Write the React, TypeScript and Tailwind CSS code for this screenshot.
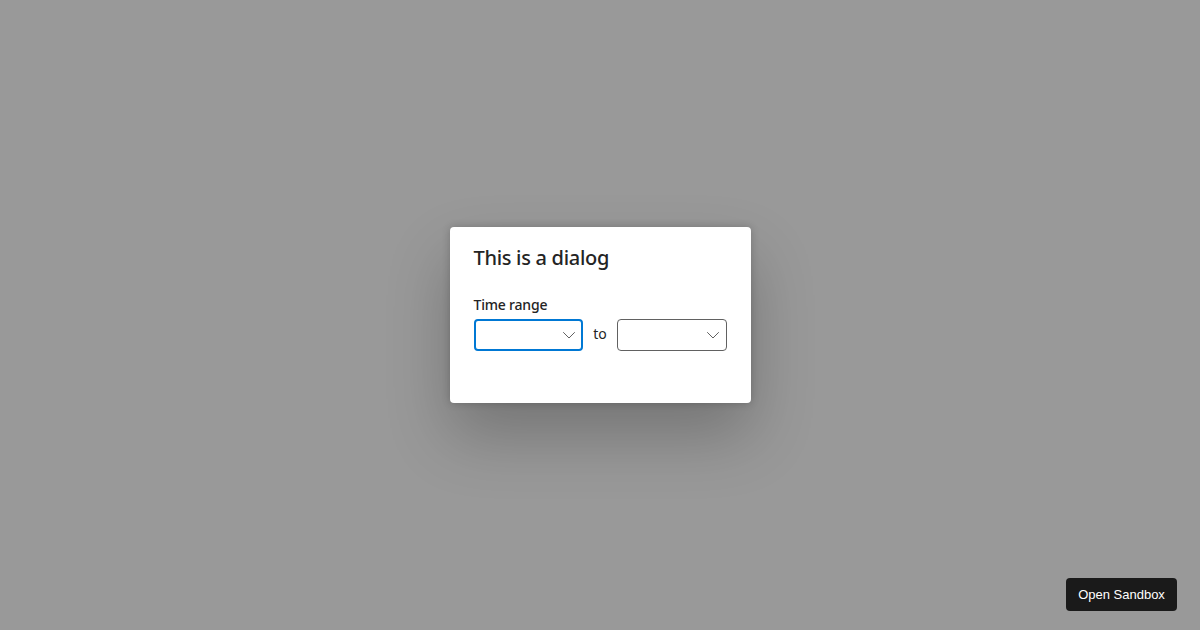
import React from "react";

function Chevron() {
  return (
    <svg width="12" height="12" viewBox="0 0 12 12" fill="none" className="text-[#616161]">
      <path d="M0.5 3.5 L6 9 L11.5 3.5" stroke="currentColor" strokeWidth="1" strokeLinecap="round" strokeLinejoin="round" />
    </svg>
  );
}

export default function App() {
  return (
    <div className="w-[1200px] h-[630px] bg-[#999999] relative flex items-center justify-center" style={{ fontFamily: '"Noto Sans", "Open Sans", sans-serif' }}>
      <div className="w-[301px] h-[176px] bg-white rounded-[4px] shadow-[0_32px_64px_rgba(0,0,0,0.24),0_0_8px_rgba(0,0,0,0.2)] px-6 pt-[17px] flex flex-col">
        <div className="text-[20px] leading-[28px] font-medium text-[#242424] tracking-[-0.3px]">This is a dialog</div>
        <div className="mt-[23px] text-[14px] leading-[20px] font-medium text-[#242424] tracking-[-0.2px]">Time range</div>
        <div className="mt-[4px] flex items-center">
          <div className="w-[110px] h-[32px] border-2 border-[#0078d4] rounded-[4px] flex items-center justify-end pr-[6px]">
            <Chevron />
          </div>
          <span className="mx-[10px] mb-[3px] text-[14px] text-[#242424]">to</span>
          <div className="w-[110px] h-[32px] border border-[#616161] rounded-[4px] flex items-center justify-end pr-[7px]">
            <Chevron />
          </div>
        </div>
      </div>
      <button className="absolute right-[23px] bottom-[19px] w-[111px] h-[33px] bg-[#1a1a1a] rounded-[4px] text-white text-[13px] flex items-center justify-center" style={{ fontFamily: '"Liberation Sans", Arial, sans-serif' }}>
        Open Sandbox
      </button>
    </div>
  );
}
